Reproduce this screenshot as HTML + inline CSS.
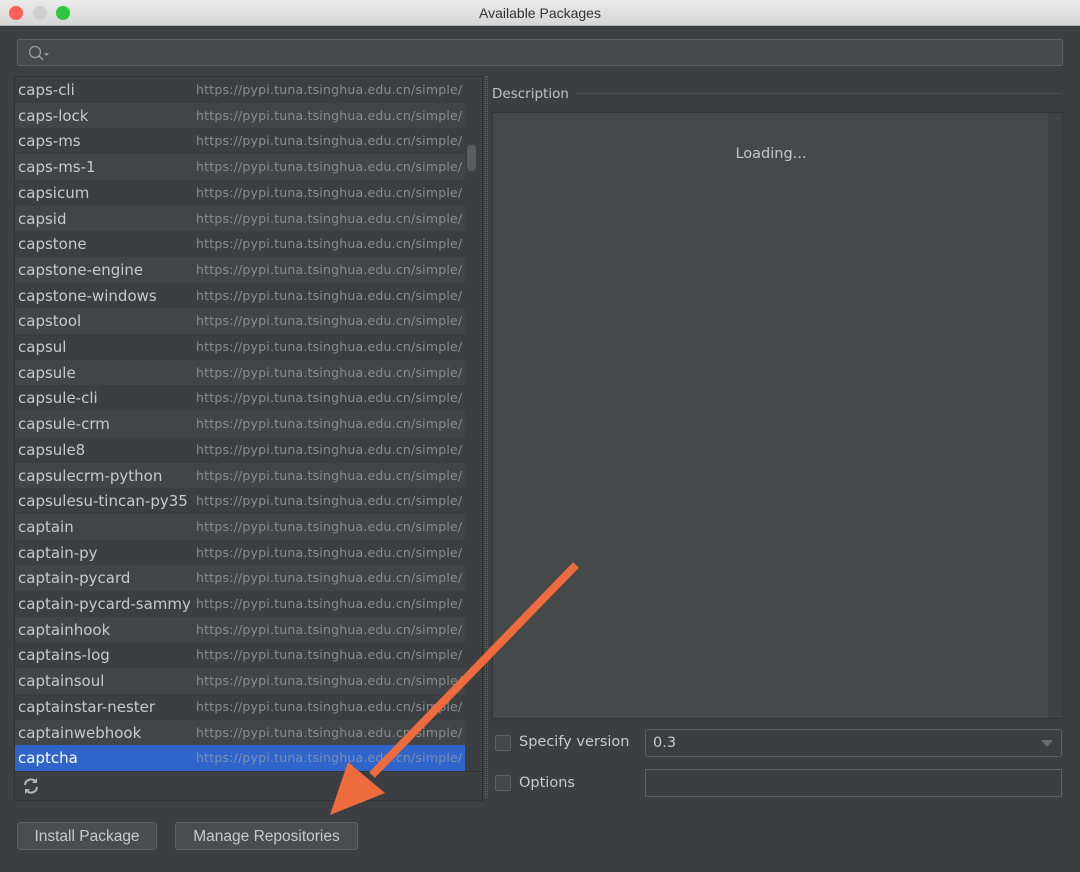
<!DOCTYPE html>
<html><head><style>
*{margin:0;padding:0;box-sizing:border-box}
body{width:1080px;height:872px;background:#3c3f41;font-family:"Liberation Sans",sans-serif;position:relative;overflow:hidden}
.title{position:absolute;left:0;top:0;width:1080px;height:26px;background:linear-gradient(#ebebeb,#d6d6d6);border-bottom:1px solid #b0b0b0;text-align:center;font-size:14px;line-height:26px;color:#333}
.dot{position:absolute;top:6px;width:14px;height:14px;border-radius:50%}
.search{position:absolute;left:17px;top:39px;width:1046px;height:27px;background:#45494a;border:1px solid #5e6163;border-radius:2px}
.list{position:absolute;left:14px;top:76px;width:469px;height:725px;border:1px solid #2f3133;background:#3c3f41}
.row{position:absolute;left:0;width:450px;height:25.7px;font-family:"DejaVu Sans",sans-serif;font-size:15px;color:#c9c9c9;line-height:27px}
.row .n{position:absolute;left:3px}
.row .u{position:absolute;left:181px;font-size:12.5px;color:#8c8c8c;letter-spacing:0.2px;line-height:25.7px}
.alt{background:#414547}
.sel{background:#2f65ca;color:#fff}
.sel .u{color:#7d8fb0}
.btn{position:absolute;top:822px;height:28px;background:#4a4d50;border:1px solid #5e6163;border-radius:3px;color:#c9c9c9;font-size:15.5px;text-align:center;line-height:28px}
.cb{position:absolute;left:495px;width:16px;height:16px;border:1px solid #5e6163;border-radius:2px;background:#43474a}
.lbl{position:absolute;left:519px;font-family:"DejaVu Sans",sans-serif;font-size:14.5px;color:#c9c9c9}
</style></head><body>
<div class="title">Available Packages
<div class="dot" style="left:9px;background:#fc5f57"></div>
<div class="dot" style="left:33px;background:#d0d0d0"></div>
<div class="dot" style="left:56px;background:#2bc840"></div>
</div>
<div class="search"><svg width="30" height="25" style="position:absolute;left:6px;top:1px"><circle cx="11" cy="11" r="5.5" stroke="#9a9a9a" stroke-width="1.3" fill="none"/><line x1="15" y1="15" x2="19" y2="19" stroke="#9a9a9a" stroke-width="1.5"/><path d="M20 12h5l-2.5 3z" fill="#9a9a9a"/></svg></div>
<div class="list" id="list">
</div>
<div style="position:absolute;left:467px;top:145px;width:9px;height:26px;background:#5a5d5f;border-radius:4px"></div>
<div style="position:absolute;left:15px;top:771px;width:467px;height:1px;background:#333"></div>
<svg width="18" height="18" style="position:absolute;left:22px;top:777px" viewBox="0 0 18 18"><path d="M3 8a6 6 0 0 1 10.5-3.5" stroke="#b5b5b5" stroke-width="2" fill="none"/><path d="M15 1v5h-5z" fill="#b5b5b5"/><path d="M15 10a6 6 0 0 1-10.5 3.5" stroke="#b5b5b5" stroke-width="2" fill="none"/><path d="M3 17v-5h5z" fill="#b5b5b5"/></svg>
<div style="position:absolute;left:485px;top:76px;width:3px;height:722px;border-left:1px dotted #666;border-right:1px dotted #666"></div>
<div style="position:absolute;left:492px;top:86px;font-family:'DejaVu Sans',sans-serif;font-size:13.5px;color:#c0c0c0">Description</div>
<div style="position:absolute;left:576px;top:93px;width:486px;height:1px;background:#4d5052"></div>
<div style="position:absolute;left:492px;top:112px;width:571px;height:607px;background:#45494a;border:1px solid #333"><div style="position:absolute;right:0;top:0;width:14px;height:100%;background:#3f4244"></div><div style="position:absolute;left:0;width:556px;top:33px;text-align:center;font-family:'DejaVu Sans',sans-serif;font-size:14.5px;color:#c5c5c5">Loading...</div></div>
<div class="cb" style="top:735px"></div><div class="lbl" style="top:734px">Specify version</div>
<div style="position:absolute;left:645px;top:729px;width:417px;height:28px;border:1px solid #5e6163;border-radius:3px;background:#3c3f41;color:#c9c9c9;font-family:'DejaVu Sans',sans-serif;font-size:14.5px;line-height:27px;padding-left:7px">0.3<svg width="12" height="8" style="position:absolute;right:8px;top:10px"><path d="M0 0h12l-6 7z" fill="#6a6d70"/></svg></div>
<div class="cb" style="top:775px"></div><div class="lbl" style="top:775px">Options</div>
<div style="position:absolute;left:645px;top:769px;width:417px;height:28px;border:1px solid #5e6163;background:#3c3f41"></div>
<div class="btn" style="left:17px;width:140px">Install Package</div>
<div class="btn" style="left:175px;width:183px">Manage Repositories</div>
<svg width="1080" height="872" style="position:absolute;left:0;top:0"><line x1="576" y1="565" x2="372" y2="775" stroke="#ee6b3d" stroke-width="8"/><path d="M330 815 L348 762 L385 793 Z" fill="#ee6b3d"/></svg>
<script>
var names=["caps-cli","caps-lock","caps-ms","caps-ms-1","capsicum","capsid","capstone","capstone-engine","capstone-windows","capstool","capsul","capsule","capsule-cli","capsule-crm","capsule8","capsulecrm-python","capsulesu-tincan-py35","captain","captain-py","captain-pycard","captain-pycard-sammy","captainhook","captains-log","captainsoul","captainstar-nester","captainwebhook","captcha"];
var h="";names.forEach(function(n,i){h+='<div class="row'+(i==26?' sel':(i%2?' alt':''))+'" style="top:'+(i*25.7)+'px"><span class="n">'+n+'</span><span class="u">https://pypi.tuna.tsinghua.edu.cn/simple/</span></div>'});
document.getElementById("list").innerHTML=h;
</script>
</body></html>
